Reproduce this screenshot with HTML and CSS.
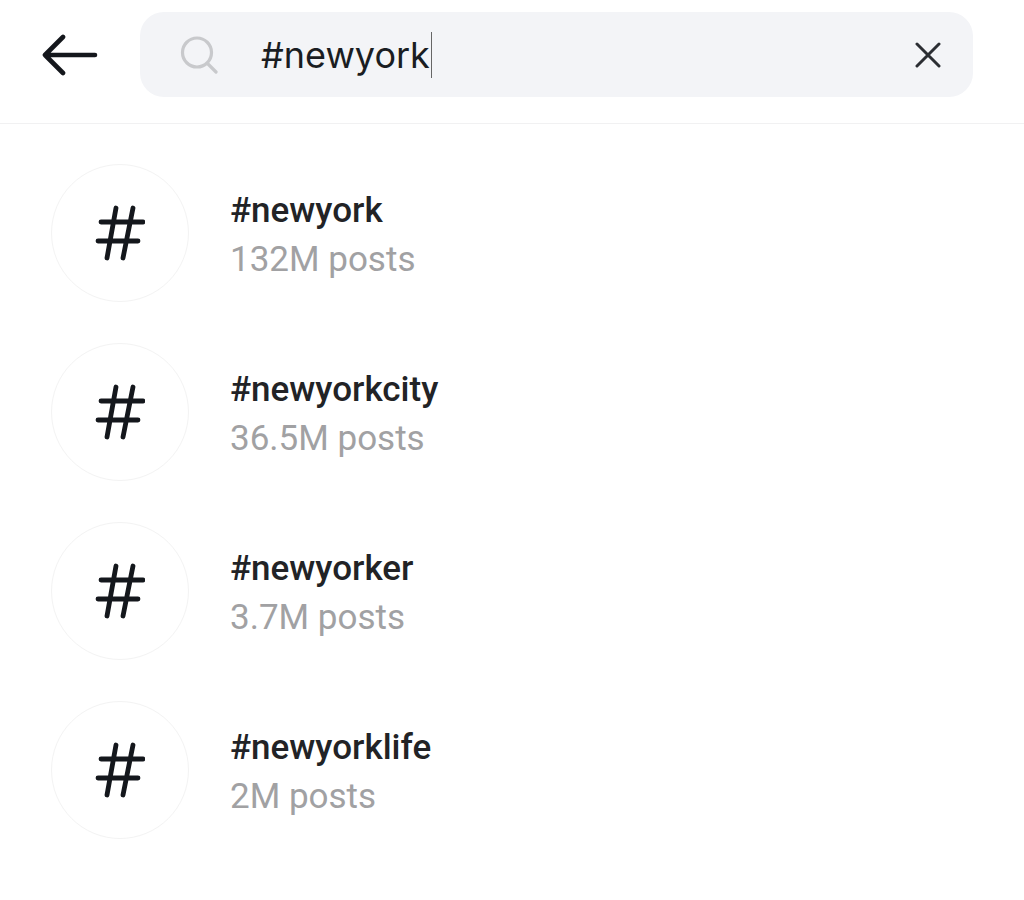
FILE: index.html
```html
<!DOCTYPE html>
<html>
<head>
    <title>Search</title>
    <link rel="stylesheet" href="styles.css">
</head>
<body>
    <div class="header">
        <svg class="back-icon" width="56" height="50" viewBox="0 0 56 50">
            <path d="M21 7 L3 25 L21 43 M3 25 H53" fill="none" stroke="#14171c" stroke-width="4.6" stroke-linecap="round" stroke-linejoin="round"/>
        </svg>
        <div class="search-box">
            <svg class="search-icon" width="38" height="38" viewBox="0 0 38 38">
                <circle cx="17" cy="16.5" r="14.5" fill="none" stroke="#c8c9cc" stroke-width="3.2"/>
                <path d="M27.5 27.5 L36 36" fill="none" stroke="#c8c9cc" stroke-width="3.2" stroke-linecap="round"/>
            </svg>
            <span class="search-text">#newyork</span>
            <span class="caret"></span>
            <svg class="clear-icon" width="26" height="26" viewBox="0 0 26 26">
                <path d="M2 2 L24 24 M24 2 L2 24" fill="none" stroke="#2b2e33" stroke-width="3" stroke-linecap="round"/>
            </svg>
        </div>
    </div>

    <div class="results">
        <div class="result">
            <div class="tag-circle">
                <svg class="hash-icon" width="50" height="56" viewBox="0 0 50 56">
                    <path d="M21 3 L12 53 M38 3 L28 53 M6 17 H48 M3 36 H43" fill="none" stroke="#14171c" stroke-width="4.8" stroke-linecap="round"/>
                </svg>
            </div>
            <div class="result-text">
                <div class="tag-name">#newyork</div>
                <div class="tag-count">132M posts</div>
            </div>
        </div>
        <div class="result">
            <div class="tag-circle">
                <svg class="hash-icon" width="50" height="56" viewBox="0 0 50 56">
                    <path d="M21 3 L12 53 M38 3 L28 53 M6 17 H48 M3 36 H43" fill="none" stroke="#14171c" stroke-width="4.8" stroke-linecap="round"/>
                </svg>
            </div>
            <div class="result-text">
                <div class="tag-name">#newyorkcity</div>
                <div class="tag-count">36.5M posts</div>
            </div>
        </div>
        <div class="result">
            <div class="tag-circle">
                <svg class="hash-icon" width="50" height="56" viewBox="0 0 50 56">
                    <path d="M21 3 L12 53 M38 3 L28 53 M6 17 H48 M3 36 H43" fill="none" stroke="#14171c" stroke-width="4.8" stroke-linecap="round"/>
                </svg>
            </div>
            <div class="result-text">
                <div class="tag-name">#newyorker</div>
                <div class="tag-count">3.7M posts</div>
            </div>
        </div>
        <div class="result">
            <div class="tag-circle">
                <svg class="hash-icon" width="50" height="56" viewBox="0 0 50 56">
                    <path d="M21 3 L12 53 M38 3 L28 53 M6 17 H48 M3 36 H43" fill="none" stroke="#14171c" stroke-width="4.8" stroke-linecap="round"/>
                </svg>
            </div>
            <div class="result-text">
                <div class="tag-name">#newyorklife</div>
                <div class="tag-count">2M posts</div>
            </div>
        </div>
    </div>
</body>
</html>
```

FILE: styles.css
```css
body {
    margin: 0;
    background-color: #fff;
    font-family: Roboto, sans-serif;
}

.header {
    display: flex;
    align-items: center;
    padding: 12px 51px 26px 42px;
    border-bottom: 1px solid #f1f1f2;
}

.back-icon {
    flex-shrink: 0;
    margin-right: 42px;
}

.search-box {
    flex-grow: 1;
    display: flex;
    align-items: center;
    height: 85px;
    padding-left: 40px;
    padding-right: 32px;
    background-color: #f3f4f7;
    border-radius: 24px;
}

.search-icon {
    flex-shrink: 0;
    margin-right: 43px;
}

.search-text {
    font-family: Inter, sans-serif;
    font-size: 36px;
    color: #1a1d22;
}

.caret {
    width: 1px;
    height: 46px;
    margin-left: 1px;
    background-color: #666;
}

.clear-icon {
    flex-shrink: 0;
    margin-left: auto;
}

.results {
    display: flex;
    flex-direction: column;
    gap: 41px;
    padding-top: 40px;
    padding-left: 51px;
}

.result {
    display: flex;
    align-items: center;
}

.tag-circle {
    display: flex;
    align-items: center;
    justify-content: center;
    width: 138px;
    height: 138px;
    box-sizing: border-box;
    border: 1.5px solid #f3f3f3;
    border-radius: 50%;
}

.result-text {
    margin-left: 41px;
    margin-top: 7px;
}

.tag-name {
    font-size: 35px;
    font-weight: 500;
    line-height: 46px;
    color: #222326;
}

.tag-count {
    font-size: 35px;
    line-height: 52px;
    color: #a1a1a3;
}
```
